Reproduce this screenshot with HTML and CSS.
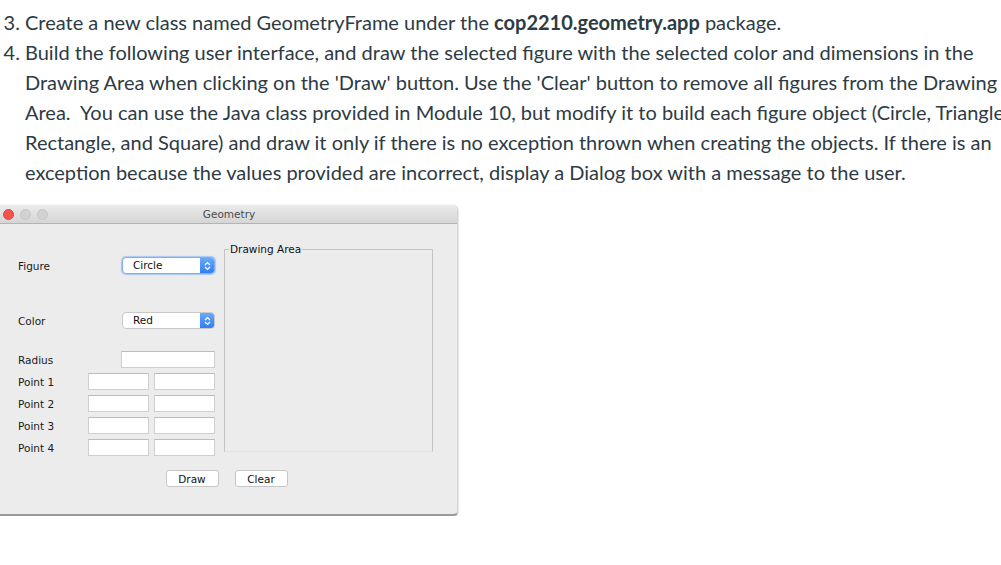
FILE: index.html
```html
<!DOCTYPE html>
<html lang="en">

<head>
    <meta charset="UTF-8">
    <meta name="viewport" content="width=device-width, initial-scale=1.0">
    <title>Geometry</title>
    <link rel="stylesheet" href="styles.css">
</head>

<body>
    <ol class="steps" start="3">
        <li>Create a new class named GeometryFrame under the <b>cop2210.geometry.app</b> package.</li>
        <li>Build the following user interface, and draw the selected figure with the selected color and dimensions in the
            Drawing Area when clicking on the 'Draw' button. Use the 'Clear' button to remove all figures from the Drawing
            Area.&nbsp; You can use the Java class provided in Module 10, but modify it to build each figure object (Circle, Triangle,
            Rectangle, and Square) and draw it only if there is no exception thrown when creating the objects. If there is an
            exception because the values provided are incorrect, display a Dialog box with a message to the user.</li>
    </ol>

    <div class="window">
        <div class="titlebar">
            <div class="lights">
                <span class="light red"></span>
                <span class="light"></span>
                <span class="light"></span>
            </div>
            <div class="title">Geometry</div>
            <div></div>
        </div>

        <div class="frame">
            <div class="main">
                <div class="form">
                    <div class="row row-figure">
                        <span class="label">Figure</span>
                        <div class="combo focused">
                            <span class="combo-text">Circle</span>
                            <span class="combo-arrow">
                                <svg width="7" height="10" viewBox="0 0 7 10">
                                    <path d="M1 4 L3.5 1.5 L6 4 M1 6 L3.5 8.5 L6 6" fill="none" stroke="#fff" stroke-width="1.2" />
                                </svg>
                            </span>
                        </div>
                    </div>
                    <div class="row row-color">
                        <span class="label">Color</span>
                        <div class="combo">
                            <span class="combo-text">Red</span>
                            <span class="combo-arrow">
                                <svg width="7" height="10" viewBox="0 0 7 10">
                                    <path d="M1 4 L3.5 1.5 L6 4 M1 6 L3.5 8.5 L6 6" fill="none" stroke="#fff" stroke-width="1.2" />
                                </svg>
                            </span>
                        </div>
                    </div>
                    <div class="row row-radius">
                        <span class="label">Radius</span>
                        <input class="field wide" type="text">
                    </div>
                    <div class="row row-point">
                        <span class="label">Point 1</span>
                        <div class="pair">
                            <input class="field" type="text">
                            <input class="field" type="text">
                        </div>
                    </div>
                    <div class="row row-point">
                        <span class="label">Point 2</span>
                        <div class="pair">
                            <input class="field" type="text">
                            <input class="field" type="text">
                        </div>
                    </div>
                    <div class="row row-point">
                        <span class="label">Point 3</span>
                        <div class="pair">
                            <input class="field" type="text">
                            <input class="field" type="text">
                        </div>
                    </div>
                    <div class="row row-point">
                        <span class="label">Point 4</span>
                        <div class="pair">
                            <input class="field" type="text">
                            <input class="field" type="text">
                        </div>
                    </div>
                </div>

                <fieldset class="drawing">
                    <legend>Drawing Area</legend>
                </fieldset>
            </div>

            <div class="actions">
                <button class="btn">Draw</button>
                <button class="btn">Clear</button>
            </div>
        </div>
    </div>
</body>

</html>
```

FILE: styles.css
```css
* {
    margin: 0;
    padding: 0;
    box-sizing: border-box;
}

body {
    background-color: #fff;
    overflow: hidden;
}

.steps {
    width: 1025px;
    padding: 7px 0 0 25px;
    font-family: Lato, "Open Sans", sans-serif;
    font-size: 20px;
    line-height: 30px;
    color: #2d3b45;
}

.steps b {
    font-weight: 700;
}

.window {
    width: 458px;
    margin-top: 18px;
    background-color: #ececec;
    border-radius: 0 5px 5px 0;
    border-right: 1px solid #d6d6d6;
    border-bottom: 2px solid #9a9a9a;
    box-shadow: 0 1px 2px rgba(0, 0, 0, 0.35);
    font-family: "DejaVu Sans", sans-serif;
    font-size: 10.5px;
    color: #1a1a1a;
}

.titlebar {
    display: grid;
    grid-template-columns: 1fr auto 1fr;
    align-items: center;
    height: 19px;
    padding-left: 3px;
    background: linear-gradient(#ebebeb, #d5d5d5);
    border-bottom: 1px solid #b4b4b4;
    border-radius: 0 5px 0 0;
}

.lights {
    display: flex;
    gap: 6px;
}

.light {
    width: 11px;
    height: 11px;
    border-radius: 50%;
    background-color: #d2d2d2;
    border: 1px solid #c6c6c6;
}

.light.red {
    background-color: #f2544d;
    border-color: #e0443e;
}

.title {
    color: #4a4a4a;
    font-size: 10.5px;
    padding-right: 2px;
}

.main {
    display: flex;
}

.form {
    width: 224px;
    padding: 33px 9px 0 0;
}

.row {
    display: flex;
    align-items: center;
    justify-content: space-between;
    height: 17px;
}

.row-color {
    margin-top: 38px;
}

.row-radius {
    margin-top: 22px;
}

.row-point {
    margin-top: 5px;
}

.label {
    padding-left: 18px;
}

.combo {
    display: flex;
    width: 93px;
    height: 17px;
    background-color: #fff;
    border: 1px solid #c8c8c8;
    border-radius: 4px;
    overflow: hidden;
}

.combo.focused {
    border-color: #7eaef0;
    box-shadow: 0 0 1px 1px #a9c9f5;
}

.combo-text {
    flex: 1;
    padding-left: 10px;
    line-height: 15px;
    color: #111;
}

.combo-arrow {
    display: flex;
    align-items: center;
    justify-content: center;
    width: 14px;
    background: linear-gradient(#68a9fa, #2f80f3);
}

.field {
    display: block;
    width: 61px;
    height: 17px;
    background-color: #fff;
    border: 1px solid #cfcfcf;
    border-top-color: #bdbdbd;
    outline: none;
}

.field.wide {
    width: 94px;
}

.pair {
    display: flex;
    gap: 5px;
}

.drawing {
    width: 209px;
    height: 209px;
    margin-top: 19px;
    padding: 0;
    border: 1px solid #c4c4c4;
    border-bottom-color: #e2e2e2;
}

.drawing legend {
    margin-left: 4px;
    padding: 0 1px;
    line-height: 13px;
    color: #111;
}

.actions {
    display: flex;
    justify-content: center;
    gap: 16px;
    padding: 14px 4px 27px 0;
}

.btn {
    width: 53px;
    height: 17px;
    background-color: #fff;
    border: 1px solid #c6c6c6;
    border-radius: 3px;
    font-family: "DejaVu Sans", sans-serif;
    font-size: 10.5px;
    color: #111;
}
```
